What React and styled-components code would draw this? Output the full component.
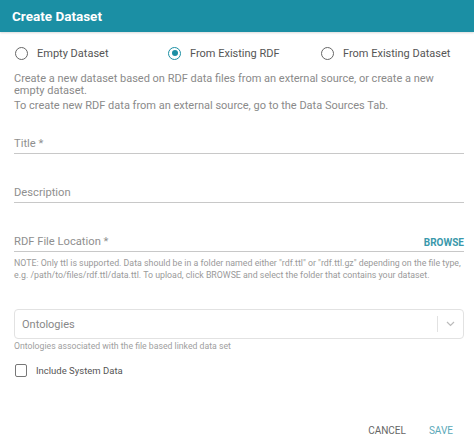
import React from "react";
import styled, { createGlobalStyle } from "styled-components";

const GlobalStyle = createGlobalStyle`
  body {
    margin: 0;
    background: #fff;
    font-family: Roboto, "Liberation Sans", sans-serif;
  }
`;

const Dialog = styled.div`
  width: 474px;
  height: 441px;
  background: #fff;
  display: flex;
  flex-direction: column;
`;

const Header = styled.div`
  height: 32px;
  background: #1b8fa4;
  display: flex;
  align-items: center;
  padding: 0 12px;
  color: #fff;
  font-size: 13.5px;
  font-weight: 700;
  box-shadow: 0 1px 2px rgba(0, 0, 0, 0.15);
`;

const Body = styled.div`
  padding: 0 10px 0 14px;
  display: flex;
  flex-direction: column;
`;

const RadioRow = styled.div`
  display: grid;
  grid-template-columns: repeat(3, 153px);
  height: 40px;
  align-items: center;
  margin-top: 1px;
`;

const RadioOption = styled.label`
  display: flex;
  align-items: center;
  gap: 9px;
  font-size: 11px;
  color: #555;
`;

const RadioCircle = styled.span`
  box-sizing: border-box;
  width: 13px;
  height: 13px;
  margin-left: 1px;
  border-radius: 50%;
  border: 1.5px solid ${(p) => (p.checked ? "#1b8fa4" : "#666")};
  display: flex;
  align-items: center;
  justify-content: center;
  &::after {
    content: "";
    width: 6px;
    height: 6px;
    border-radius: 50%;
    background: ${(p) => (p.checked ? "#1b8fa4" : "transparent")};
  }
`;

const Intro = styled.p`
  margin: 0 0 3px;
  font-size: 11px;
  line-height: 12px;
  color: #8a8a8a;
`;

const Field = styled.div`
  margin-top: ${(p) => p.top}px;
  display: flex;
  align-items: flex-end;
  justify-content: space-between;
  border-bottom: 1px solid #c8c8c8;
  padding-bottom: 3px;
`;

const FieldLabel = styled.span`
  font-size: 11.2px;
  color: #8f8f8f;
`;

const BrowseButton = styled.span`
  font-size: 10px;
  font-weight: 700;
  color: #3a98ab;
`;

const Note = styled.p`
  margin: 5px 0 0;
  font-size: 8.8px;
  line-height: 12px;
  color: #9a9a9a;
`;

const Select = styled.div`
  margin-top: 28px;
  height: 30px;
  box-sizing: border-box;
  border: 1px solid #e2e2e2;
  border-radius: 4px;
  display: flex;
  align-items: center;
  padding-left: 7px;
`;

const SelectText = styled.span`
  flex: 1;
  font-size: 11px;
  color: #888;
`;

const SelectDivider = styled.span`
  width: 1px;
  height: 16px;
  background: #e2e2e2;
`;

const Chevron = styled.span`
  width: 25px;
  display: flex;
  align-items: center;
  justify-content: center;
`;

const Helper = styled.div`
  margin-top: 2px;
  font-size: 8.7px;
  color: #a0a0a0;
`;

const CheckRow = styled.label`
  margin-top: 13px;
  display: flex;
  align-items: center;
  gap: 9px;
  font-size: 9.5px;
  color: #555;
`;

const CheckBox = styled.span`
  box-sizing: border-box;
  width: 12px;
  height: 13px;
  margin-left: 1px;
  border: 1.5px solid #777;
  border-radius: 2px;
`;

const Actions = styled.div`
  margin-top: auto;
  height: 22px;
  display: flex;
  justify-content: flex-end;
  align-items: center;
  gap: 23px;
  padding-right: 21px;
`;

const ActionButton = styled.span`
  font-size: 10px;
  color: ${(p) => (p.primary ? "#5aa9b9" : "#666")};
`;

export default function App() {
  return (
    <>
      <GlobalStyle />
      <Dialog>
        <Header>Create Dataset</Header>
        <Body>
          <RadioRow>
            <RadioOption>
              <RadioCircle />
              Empty Dataset
            </RadioOption>
            <RadioOption>
              <RadioCircle checked />
              From Existing RDF
            </RadioOption>
            <RadioOption>
              <RadioCircle />
              From Existing Dataset
            </RadioOption>
          </RadioRow>
          <Intro>
            Create a new dataset based on RDF data files from an external source, or create a new
            empty dataset.
          </Intro>
          <Intro>To create new RDF data from an external source, go to the Data Sources Tab.</Intro>

          <Field top={22}>
            <FieldLabel>Title *</FieldLabel>
          </Field>
          <Field top={32}>
            <FieldLabel>Description</FieldLabel>
          </Field>
          <Field top={32}>
            <FieldLabel>RDF File Location *</FieldLabel>
            <BrowseButton>BROWSE</BrowseButton>
          </Field>
          <Note>
            NOTE: Only ttl is supported. Data should be in a folder named either "rdf.ttl" or
            "rdf.ttl.gz" depending on the file type, e.g. /path/to/files/rdf.ttl/data.ttl. To
            upload, click BROWSE and select the folder that contains your dataset.
          </Note>

          <Select>
            <SelectText>Ontologies</SelectText>
            <SelectDivider />
            <Chevron>
              <svg width="9" height="6" viewBox="0 0 9 6">
                <path d="M1 1l3.5 3.5L8 1" fill="none" stroke="#bbb" strokeWidth="1.2" />
              </svg>
            </Chevron>
          </Select>
          <Helper>Ontologies associated with the file based linked data set</Helper>

          <CheckRow>
            <CheckBox />
            Include System Data
          </CheckRow>
        </Body>
        <Actions>
          <ActionButton>CANCEL</ActionButton>
          <ActionButton primary>SAVE</ActionButton>
        </Actions>
      </Dialog>
    </>
  );
}
